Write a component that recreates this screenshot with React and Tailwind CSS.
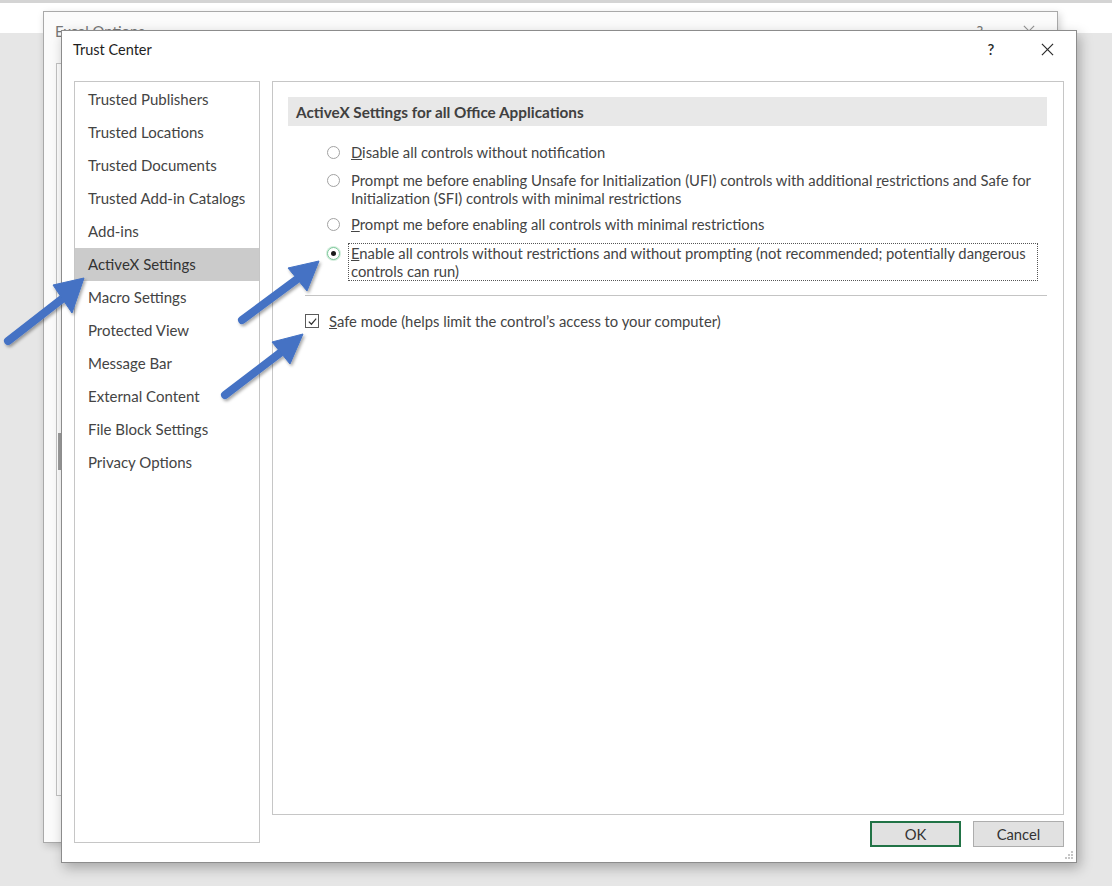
import React from 'react';

const navItems = [
  'Trusted Publishers',
  'Trusted Locations',
  'Trusted Documents',
  'Trusted Add-in Catalogs',
  'Add-ins',
  'ActiveX Settings',
  'Macro Settings',
  'Protected View',
  'Message Bar',
  'External Content',
  'File Block Settings',
  'Privacy Options',
];

const arrows = [
  { from: [8, 341], base: [62, 299], tip: [84, 278], a: [53, 285], b: [72, 313] },
  { from: [242, 320], base: [296, 280], tip: [319, 261], a: [288, 268], b: [307, 291] },
  { from: [225, 395], base: [280, 353], tip: [303, 334], a: [272, 342], b: [290, 364] },
];

function Radio({ checked }) {
  return (
    <span
      className={`mt-[2.5px] flex h-[13px] w-[13px] flex-shrink-0 items-center justify-center rounded-full border bg-white ${
        checked ? 'border-[#7cc79a] shadow-[0_0_0_1px_#d6efdf]' : 'border-[#a2a2a2]'
      }`}
    >
      {checked && <span className="h-[5px] w-[5px] rounded-full bg-[#1b1b1b]" />}
    </span>
  );
}

function CloseIcon({ className }) {
  return (
    <svg viewBox="0 0 14 14" className={className}>
      <path d="M1 1 L13 13 M13 1 L1 13" stroke="#2b2b2b" strokeWidth="1.3" fill="none" />
    </svg>
  );
}

export default function App() {
  return (
    <div className="relative h-[886px] w-[1112px] overflow-hidden bg-[#e6e6e6] font-['Lato','Noto_Sans',sans-serif] text-[14.8px] text-[#444]">
      {/* desktop strip */}
      <div className="h-[3px] bg-[#d4d4d4]" />
      <div className="h-[30px] bg-white" />

      {/* Excel Options window behind */}
      <div className="absolute left-[43px] top-[11px] h-[832px] w-[1015px] border border-[#a9a9a9] bg-[#fbfbfb] shadow-[2px_3px_8px_rgba(0,0,0,0.18)]">
        <div className="flex items-center justify-between pl-[11px] pr-[22px] pt-[10px] leading-[18px] text-[#777]">
          <span>Excel Options</span>
          <div className="flex items-center gap-[40px]">
            <span>?</span>
            <CloseIcon className="h-[12px] w-[12px] opacity-50" />
          </div>
        </div>
        <div className="ml-[12px] mt-[23px] h-[733px] w-[200px] border border-[#c3c3c3] bg-white">
          <div className="ml-[1px] mt-[369px] h-[37px] w-[4px] bg-[#9d9d9d]" />
        </div>
      </div>

      {/* Trust Center dialog */}
      <div className="absolute left-[61px] top-[30px] flex h-[833px] w-[1016px] flex-col border border-[#8c8c8c] bg-white shadow-[3px_5px_12px_rgba(0,0,0,0.28)]">
        <div className="flex h-[37px] items-center justify-between pl-[11px] pr-[19px]">
          <span className="text-[14.5px] text-[#1e1e1e]">Trust Center</span>
          <div className="flex items-center gap-[36px]">
            <span className="w-[20px] text-center text-[15px] font-semibold text-[#2b2b2b]">?</span>
            <span className="flex w-[20px] justify-center">
              <CloseIcon className="h-[13px] w-[13px]" />
            </span>
          </div>
        </div>

        <div className="flex items-start gap-[12px] px-[12px] pt-[13px]">
          {/* left nav */}
          <div className="h-[762px] w-[186px] border border-[#c6c6c6] pt-[1px] text-[15px]">
            {navItems.map((label) => (
              <div
                key={label}
                className={`flex h-[33px] items-center pl-[13px] ${
                  label === 'ActiveX Settings' ? 'bg-[#cbcbcb] text-[#333]' : ''
                }`}
              >
                {label}
              </div>
            ))}
          </div>

          {/* right content */}
          <div className="flex flex-1 flex-col">
            <div className="h-[734px] border border-[#c6c6c6] pl-[15px] pr-[16px] pt-[15px] leading-[18px]">
              <div className="flex h-[29px] items-center bg-[#e8e8e8] px-[8px] text-[15.3px] font-bold text-[#404040]">
                ActiveX Settings for all Office Applications
              </div>

              <div className="pl-[39px]">
                <div className="mt-[17px] flex gap-[11px]">
                  <Radio />
                  <span>
                    <span className="underline">D</span>isable all controls without notification
                  </span>
                </div>
                <div className="mt-[10px] flex gap-[11px]">
                  <Radio />
                  <span>
                    Prompt me before enabling Unsafe for Initialization (UFI) controls with additional{' '}
                    <span className="underline">r</span>estrictions and Safe for
                    <br />
                    Initialization (SFI) controls with minimal restrictions
                  </span>
                </div>
                <div className="mt-[8px] flex gap-[11px]">
                  <Radio />
                  <span>
                    <span className="underline">P</span>rompt me before enabling all controls with minimal restrictions
                  </span>
                </div>
                <div className="mt-[10px] flex gap-[8px]">
                  <span className="pt-[1px]">
                    <Radio checked />
                  </span>
                  <span className="w-[690px] whitespace-nowrap border border-dotted border-[#555] pl-[2px]">
                    <span className="underline">E</span>nable all controls without restrictions and without prompting (not
                    recommended; potentially dangerous
                    <br />
                    controls can run)
                  </span>
                </div>
              </div>

              <div className="ml-[17px] mt-[14px] border-t border-b border-t-[#c4c4c4] border-b-white" />

              <div className="ml-[17px] mt-[15px] flex items-center gap-[10px]">
                <span className="flex h-[14px] w-[14px] items-center justify-center border border-[#5a5a5a] bg-white">
                  <svg viewBox="0 0 12 12" className="h-[11px] w-[11px]">
                    <path d="M2 6.2 L4.8 9 L10 2.8" stroke="#333" strokeWidth="1.3" fill="none" />
                  </svg>
                </span>
                <span>
                  <span className="underline">S</span>afe mode (helps limit the control’s access to your computer)
                </span>
              </div>
            </div>

            <div className="mt-[6px] flex justify-end gap-[12px]">
              <button className="h-[26px] w-[91px] border-2 border-[#217346] bg-[#e1e1e1] text-[#333]">OK</button>
              <button className="h-[26px] w-[91px] border border-[#adadad] bg-[#e1e1e1] text-[#333]">Cancel</button>
            </div>
          </div>
        </div>

        {/* resize grip */}
        <svg viewBox="0 0 10 10" className="absolute bottom-[2px] right-[2px] h-[10px] w-[10px]">
          {[[8, 2], [8, 5], [5, 5], [8, 8], [5, 8], [2, 8]].map(([x, y]) => (
            <rect key={`${x}-${y}`} x={x - 0.75} y={y - 0.75} width="1.5" height="1.5" fill="#9a9a9a" />
          ))}
        </svg>
      </div>

      {/* annotation arrows */}
      <svg className="pointer-events-none absolute inset-0 h-[886px] w-[1112px]" viewBox="0 0 1112 886">
        <defs>
          <filter id="sh" x="-20%" y="-20%" width="140%" height="140%">
            <feDropShadow dx="1.5" dy="2" stdDeviation="1.6" floodColor="#000" floodOpacity="0.35" />
          </filter>
        </defs>
        {arrows.map((ar, i) => (
          <g key={i} filter="url(#sh)" fill="#4472c4" stroke="#4472c4">
            <line x1={ar.from[0]} y1={ar.from[1]} x2={ar.base[0]} y2={ar.base[1]} strokeWidth="8" strokeLinecap="round" />
            <polygon points={`${ar.tip.join(',')} ${ar.a.join(',')} ${ar.b.join(',')}`} strokeWidth="1" strokeLinejoin="round" />
          </g>
        ))}
      </svg>
    </div>
  );
}
